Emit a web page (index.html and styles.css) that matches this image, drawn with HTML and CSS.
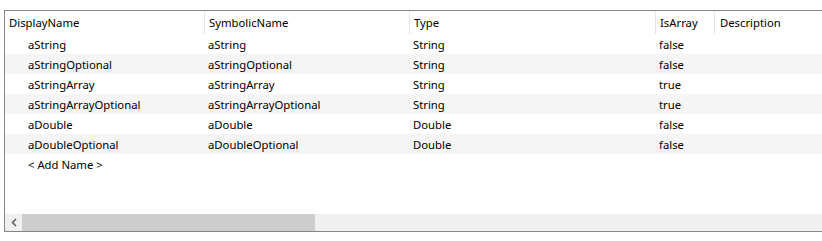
FILE: index.html
```html
<!DOCTYPE html>
<html>
<head>
<meta charset="utf-8">
<link rel="stylesheet" href="styles.css">
</head>
<body>
<div class="frame">
  <div class="grid header">
    <div class="hcell">DisplayName</div>
    <div class="hcell">SymbolicName</div>
    <div class="hcell">Type</div>
    <div class="hcell">IsArray</div>
    <div class="hcell last">Description</div>
  </div>
  <div class="grid row">
    <div class="cell first">aString</div><div class="cell">aString</div><div class="cell">String</div><div class="cell">false</div><div class="cell"></div>
  </div>
  <div class="grid row alt">
    <div class="cell first">aStringOptional</div><div class="cell">aStringOptional</div><div class="cell">String</div><div class="cell">false</div><div class="cell"></div>
  </div>
  <div class="grid row">
    <div class="cell first">aStringArray</div><div class="cell">aStringArray</div><div class="cell">String</div><div class="cell">true</div><div class="cell"></div>
  </div>
  <div class="grid row alt">
    <div class="cell first">aStringArrayOptional</div><div class="cell">aStringArrayOptional</div><div class="cell">String</div><div class="cell">true</div><div class="cell"></div>
  </div>
  <div class="grid row">
    <div class="cell first">aDouble</div><div class="cell">aDouble</div><div class="cell">Double</div><div class="cell">false</div><div class="cell"></div>
  </div>
  <div class="grid row alt">
    <div class="cell first">aDoubleOptional</div><div class="cell">aDoubleOptional</div><div class="cell">Double</div><div class="cell">false</div><div class="cell"></div>
  </div>
  <div class="grid row">
    <div class="cell first">&lt; Add Name &gt;</div><div class="cell"></div><div class="cell"></div><div class="cell"></div><div class="cell"></div>
  </div>
  <div class="spacer"></div>
  <div class="hscroll">
    <div class="arrow">
      <svg width="8" height="9" viewBox="0 0 8 9"><polyline points="6,1 2.5,4.5 6,8" fill="none" stroke="#606060" stroke-width="1.6"/></svg>
    </div>
    <div class="track"><div class="thumb"></div></div>
  </div>
</div>
</body>
</html>
```
FILE: styles.css
```css
html, body {
  margin: 0;
  padding: 0;
  background: #ffffff;
  overflow: hidden;
}
body {
  font-family: "Noto Sans", "Open Sans", sans-serif;
  font-size: 11.3px;
  color: #000000;
}
.frame {
  margin: 10px 0 0 4px;
  width: 830px;
  height: 220px;
  border-top: 1px solid #828790;
  border-left: 1px solid #828790;
  border-bottom: 1px solid #828790;
  display: flex;
  flex-direction: column;
}
.grid {
  display: grid;
  grid-template-columns: 200px 205px 246px 59px 1fr;
}
.header {
  height: 23px;
}
.hcell {
  border-right: 1px solid #e5e5e5;
  padding: 1px 0 0 4px;
  line-height: 22px;
  white-space: nowrap;
}
.hcell.last {
  border-right: none;
  padding-left: 5px;
}
.row {
  height: 20px;
}
.row.alt {
  background: #f5f5f5;
}
.cell {
  padding: 1px 0 0 3px;
  line-height: 19px;
  white-space: nowrap;
}
.cell.first {
  padding-left: 23px;
}
.spacer {
  flex: 1;
}
.hscroll {
  height: 17px;
  display: flex;
  background: #f0f0f0;
}
.arrow {
  width: 17px;
  display: flex;
  align-items: center;
  justify-content: center;
}
.track {
  flex: 1;
  display: flex;
}
.thumb {
  width: 293px;
  height: 100%;
  background: #cdcdcd;
}
```
